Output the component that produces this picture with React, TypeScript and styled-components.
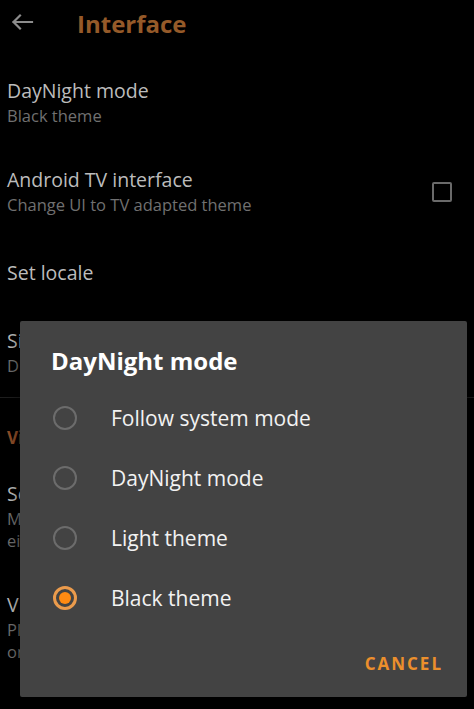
import styled, { createGlobalStyle } from "styled-components";

const GlobalStyle = createGlobalStyle`
  html, body, #root {
    margin: 0;
    height: 100%;
  }
  body {
    background: #000;
    font-family: "Open Sans", "Liberation Sans", sans-serif;
    overflow: hidden;
  }
`;

const Screen = styled.div`
  position: relative;
  width: 474px;
  height: 709px;
  overflow: hidden;
  background: #000;
`;

const Toolbar = styled.header`
  display: flex;
  align-items: center;
  height: 46px;
  padding-left: 10px;
`;

const BackIcon = styled.svg`
  flex: none;
  margin-bottom: 3px;
`;

const ToolbarTitle = styled.h1`
  margin: 0 0 0 43px;
  font-size: 24px;
  font-weight: 700;
  color: #955a29;
`;

const List = styled.div`
  padding-top: 12px;
`;

const Row = styled.div`
  display: flex;
  align-items: center;
  min-height: 32px;
  padding: 20px 22px 20px 7px;
`;

const RowText = styled.div`
  flex: 1;
  min-width: 0;
`;

const RowTitle = styled.div`
  font-size: 19.5px;
  line-height: 25px;
  color: #bcbcbc;
`;

const RowSummary = styled.div`
  margin-top: 2px;
  font-size: 16.5px;
  line-height: 22px;
  color: #707070;
`;

const Checkbox = styled.span`
  flex: none;
  width: 20px;
  height: 20px;
  box-sizing: border-box;
  border: 2px solid #6a6a6a;
  border-radius: 2px;
`;

const Divider = styled.div`
  height: 1px;
  background: #1e1e1e;
`;

const Category = styled.div`
  padding: 29px 7px 12px;
  font-size: 17px;
  line-height: 22px;
  font-weight: 700;
  color: #8e4e28;
`;

const Dialog = styled.div`
  position: absolute;
  left: 20px;
  top: 321px;
  width: 447px;
  height: 376px;
  box-sizing: border-box;
  display: flex;
  flex-direction: column;
  padding: 24px 0 16px;
  background: #434343;
  border-radius: 2px;
  box-shadow: 0 4px 16px rgba(0, 0, 0, 0.6);
`;

const DialogTitle = styled.h2`
  margin: 0 0 11px 31px;
  font-size: 24px;
  line-height: 32px;
  font-weight: 700;
  color: #fff;
`;

const Option = styled.label`
  display: flex;
  align-items: center;
  gap: 34px;
  height: 60px;
  padding-left: 33px;
  font-size: 21px;
  color: #f2f2f2;
`;

const Radio = styled.span<{ $checked: boolean }>`
  position: relative;
  flex: none;
  width: 24px;
  height: 24px;
  box-sizing: border-box;
  border-radius: 50%;
  border: ${(p) => (p.$checked ? "3px solid #eb9b4c" : "2px solid #6c6c6c")};

  &::after {
    content: "";
    display: ${(p) => (p.$checked ? "block" : "none")};
    position: absolute;
    left: 3px;
    top: 3px;
    width: 12px;
    height: 12px;
    border-radius: 50%;
    background: #ff8a12;
  }
`;

const Actions = styled.div`
  margin-top: auto;
  display: flex;
  justify-content: flex-end;
  padding-right: 12px;
`;

const CancelButton = styled.button`
  height: 36px;
  padding: 0 12px 0 8px;
  border: none;
  background: none;
  font-family: inherit;
  font-size: 17px;
  font-weight: 700;
  letter-spacing: 2px;
  color: #ec8f2c;
`;

const options = ["Follow system mode", "DayNight mode", "Light theme", "Black theme"];

export default function App() {
  const selected = "Black theme";
  return (
    <Screen>
      <GlobalStyle />
      <Toolbar>
        <BackIcon width="24" height="18" viewBox="0 0 24 18">
          <path
            d="M22 9H3.5M10 2.5L3.5 9l6.5 6.5"
            fill="none"
            stroke="#8c8c8c"
            strokeWidth="2.2"
            strokeLinecap="square"
          />
        </BackIcon>
        <ToolbarTitle>Interface</ToolbarTitle>
      </Toolbar>
      <List>
        <Row>
          <RowText>
            <RowTitle>DayNight mode</RowTitle>
            <RowSummary>Black theme</RowSummary>
          </RowText>
        </Row>
        <Row>
          <RowText>
            <RowTitle>Android TV interface</RowTitle>
            <RowSummary>Change UI to TV adapted theme</RowSummary>
          </RowText>
          <Checkbox />
        </Row>
        <Row>
          <RowText>
            <RowTitle>Set locale</RowTitle>
          </RowText>
        </Row>
        <Row>
          <RowText>
            <RowTitle>Simplified layout</RowTitle>
            <RowSummary>Display fewer items in the main screen</RowSummary>
          </RowText>
        </Row>
        <Divider />
        <Category>Video</Category>
        <Row>
          <RowText>
            <RowTitle>Screen orientation</RowTitle>
            <RowSummary>
              Manage the screen orientation of the player
              <br />
              either automatic or locked
            </RowSummary>
          </RowText>
        </Row>
        <Row>
          <RowText>
            <RowTitle>Video popup</RowTitle>
            <RowSummary>
              Play videos in a popup window
              <br />
              on top of other apps
            </RowSummary>
          </RowText>
        </Row>
      </List>

      <Dialog>
        <DialogTitle>DayNight mode</DialogTitle>
        {options.map((o) => (
          <Option key={o}>
            <Radio $checked={o === selected} />
            {o}
          </Option>
        ))}
        <Actions>
          <CancelButton>CANCEL</CancelButton>
        </Actions>
      </Dialog>
    </Screen>
  );
}
